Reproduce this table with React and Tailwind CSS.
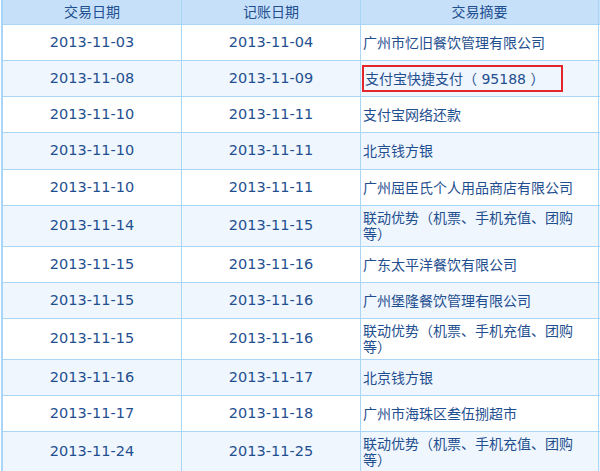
const rows = [
  { d1: "2013-11-03", d2: "2013-11-04", memo: "广州市忆旧餐饮管理有限公司", h: "h-[36px]" },
  { d1: "2013-11-08", d2: "2013-11-09", memo: "支付宝快捷支付（ 95188 ）", h: "h-[36px]", mark: true },
  { d1: "2013-11-10", d2: "2013-11-11", memo: "支付宝网络还款", h: "h-[36px]" },
  { d1: "2013-11-10", d2: "2013-11-11", memo: "北京钱方银", h: "h-[37px]" },
  { d1: "2013-11-10", d2: "2013-11-11", memo: "广州屈臣氏个人用品商店有限公司", h: "h-[36px]" },
  { d1: "2013-11-14", d2: "2013-11-15", memo: "联动优势（机票、手机充值、团购等）", h: "h-[41px]" },
  { d1: "2013-11-15", d2: "2013-11-16", memo: "广东太平洋餐饮有限公司", h: "h-[36px]" },
  { d1: "2013-11-15", d2: "2013-11-16", memo: "广州堡隆餐饮管理有限公司", h: "h-[36px]" },
  { d1: "2013-11-15", d2: "2013-11-16", memo: "联动优势（机票、手机充值、团购等）", h: "h-[41px]" },
  { d1: "2013-11-16", d2: "2013-11-17", memo: "北京钱方银", h: "h-[36px]" },
  { d1: "2013-11-17", d2: "2013-11-18", memo: "广州市海珠区叁伍捌超市", h: "h-[36px]" },
  { d1: "2013-11-24", d2: "2013-11-25", memo: "联动优势（机票、手机充值、团购等）", h: "h-[41px]" },
];

const font = { fontFamily: '"DejaVu Sans", Verdana, "Noto Sans CJK SC", sans-serif' };

export default function App() {
  return (
    <div
      className="w-[600px] h-[471px] overflow-hidden bg-white text-[#1f4f8f] text-[14px] [text-spacing-trim:space-all]"
      style={font}
    >
      <div className="ml-[1px] w-[599px] border-l-2 border-[#a9d5f6]">
        {/* header */}
        <div className="flex h-[25px] bg-[#c6e0fa] border-b border-[#a9d5f6]">
          <div className="w-[179px] border-r border-[#a9d5f6] flex items-center justify-center">交易日期</div>
          <div className="w-[179px] border-r border-[#a9d5f6] flex items-center justify-center">记账日期</div>
          <div className="w-[238px] border-r border-[#a9d5f6] flex items-center justify-center">交易摘要</div>
        </div>

        {rows.map((r, i) => (
          <div
            key={i}
            className={`flex ${r.h} border-b border-[#a9d5f6] ${i % 2 === 1 ? "bg-[#eff6fe]" : "bg-white"}`}
          >
            <div className="w-[179px] border-r border-[#a9d5f6] flex items-center justify-center text-[14.5px]">
              {r.d1}
            </div>
            <div className="w-[179px] border-r border-[#a9d5f6] flex items-center justify-center text-[14.5px]">
              {r.d2}
            </div>
            <div className="w-[238px] border-r border-[#a9d5f6] flex items-center pl-[2px] pr-[3px] leading-[16px]">
              {r.mark ? (
                <span className="w-[201px] h-[27px] border-2 border-[#e3262c] flex items-center pl-[1px] -ml-[1px]">
                  支付宝快捷支付（ 95188 ）
                </span>
              ) : (
                <span>{r.memo}</span>
              )}
            </div>
          </div>
        ))}
      </div>
    </div>
  );
}
